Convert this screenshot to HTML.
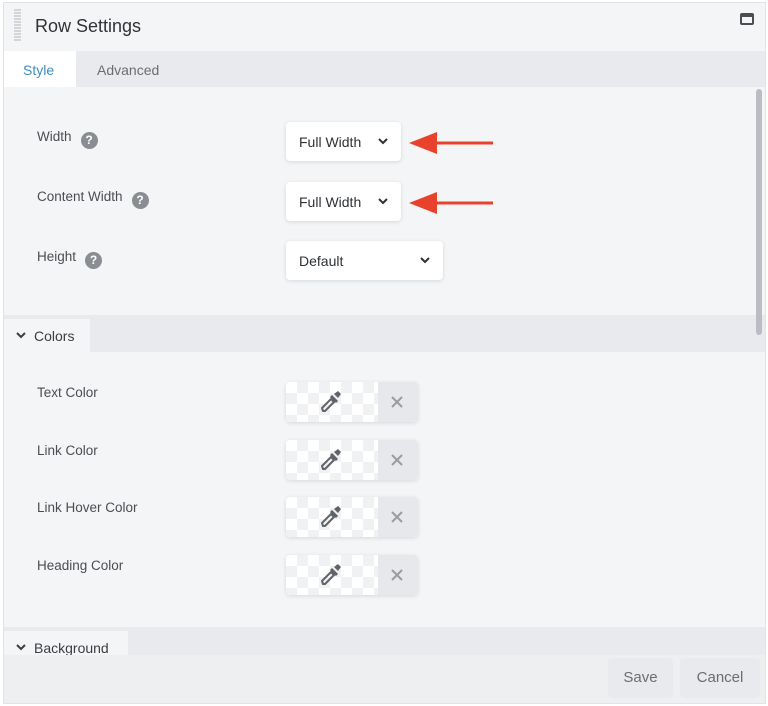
<!DOCTYPE html>
<html><head><style>
*{box-sizing:border-box;margin:0;padding:0}
body{width:768px;height:706px;background:#fff;font-family:"Liberation Sans",sans-serif;position:relative;overflow:hidden}
.panel{position:absolute;left:3px;top:2px;width:763px;height:702px;background:#f4f5f7;border:1px solid #e2e3e6}
.abs{position:absolute}
.lbl{position:absolute;left:37px;font-size:13.5px;color:#4a4d52}
.q{display:inline-block;width:17px;height:17px;border-radius:50%;background:#8a8d91;color:#fff;font-size:12px;font-weight:bold;text-align:center;line-height:17px;margin-left:9px;vertical-align:-3px}
.dd{position:absolute;left:286px;height:39px;background:#fff;border-radius:4px;box-shadow:0 1px 4px rgba(0,0,0,.12);font-size:14px;color:#2e3135;padding:12px 0 0 13px}
.dd svg{position:absolute;top:16px}
.cp{position:absolute;left:286px;width:132px;height:40px;border-radius:4px;box-shadow:0 1px 4px rgba(0,0,0,.12);overflow:hidden;background:#fff}
.chk{position:absolute;left:0;top:0;width:92px;height:40px;background-color:#fff;background-image:linear-gradient(45deg,#f0f1f3 25%,transparent 25%,transparent 75%,#f0f1f3 75%),linear-gradient(45deg,#f0f1f3 25%,transparent 25%,transparent 75%,#f0f1f3 75%);background-size:22px 22px;background-position:0 0,11px 11px}
.x{position:absolute;left:92px;top:0;width:40px;height:40px;background:#e7e8eb}
.btn{position:absolute;top:658px;height:40px;background:#e9eaed;border-radius:4px;color:#6a6d72;font-size:15px;text-align:center;line-height:40px}
</style></head><body>
<div class="panel"></div>
<div class="abs" style="left:14px;top:9px;width:7px;height:33px;background:repeating-linear-gradient(#d3d5d8 0 2px,transparent 2px 3px)"></div>
<div class="abs" style="left:35px;top:16px;font-size:18px;color:#2f3236">Row Settings</div>
<div class="abs" style="left:740px;top:13px;width:14px;height:12px;border:2px solid #4a4d52;border-top-width:4px;border-radius:2px"></div>
<div class="abs" style="left:4px;top:51px;width:761px;height:36px;background:#e9eaed"></div>
<div class="abs" style="left:4px;top:51px;width:72px;height:36px;background:#fff;color:#3f8fbf;font-size:14px;padding:11px 0 0 19px">Style</div>
<div class="abs" style="left:97px;top:62px;color:#6a6d72;font-size:14px">Advanced</div>
<div class="lbl" style="top:129px">Width<span class="q">?</span></div>
<div class="dd" style="top:122px;width:115px">Full Width<svg style="left:92px" width="10" height="7"><path d="M1 1l4 4 4-4" stroke="#2e3135" stroke-width="2" fill="none"/></svg></div>
<div class="lbl" style="top:189px">Content Width<span class="q">?</span></div>
<div class="dd" style="top:182px;width:115px">Full Width<svg style="left:92px" width="10" height="7"><path d="M1 1l4 4 4-4" stroke="#2e3135" stroke-width="2" fill="none"/></svg></div>
<div class="lbl" style="top:249px">Height<span class="q">?</span></div>
<div class="dd" style="top:241px;width:157px">Default<svg style="left:134px" width="10" height="7"><path d="M1 1l4 4 4-4" stroke="#2e3135" stroke-width="2" fill="none"/></svg></div>
<svg class="abs" style="left:405px;top:128px" width="92" height="90">
<path d="M22 15H88" stroke="#e8412c" stroke-width="3"/><path d="M4 15L32 4V26Z" fill="#e8412c"/>
<path d="M22 75H88" stroke="#e8412c" stroke-width="3"/><path d="M4 75L32 64V86Z" fill="#e8412c"/>
</svg>
<div class="abs" style="left:4px;top:315px;width:761px;height:37px;background:#e9eaed"></div>
<div class="abs" style="left:4px;top:319px;width:86px;height:33px;background:#f4f5f7;font-size:14px;color:#3a3d41;padding:9px 0 0 30px">Colors</div>
<svg class="abs" style="left:16px;top:332px" width="10" height="7"><path d="M1 1l4 4 4-4" stroke="#3a3d41" stroke-width="2" fill="none"/></svg>
<div class="abs" style="left:756px;top:89px;width:6px;height:246px;background:#babdc3;border-radius:3px"></div>
<div class="lbl" style="top:385px">Text Color</div>
<div class="lbl" style="top:443px">Link Color</div>
<div class="lbl" style="top:500px">Link Hover Color</div>
<div class="lbl" style="top:558px">Heading Color</div>
<div class="cp" style="top:382px"><div class="chk"></div><div class="x"></div></div>
<div class="cp" style="top:440px"><div class="chk"></div><div class="x"></div></div>
<div class="cp" style="top:497px"><div class="chk"></div><div class="x"></div></div>
<div class="cp" style="top:555px"><div class="chk"></div><div class="x"></div></div>
<svg class="abs" style="left:286px;top:382px" width="132" height="215">
<g id="ic"><path d="M37 29l-1-3 9-9 3 3-9 9z" stroke="#606368" stroke-width="2" fill="none" stroke-linejoin="round"/><path d="M45 14l6 6" stroke="#606368" stroke-width="3"/><path d="M48 12l4-3 3 3-3 4z" fill="#606368"/><path d="M106 15l10 10M116 15l-10 10" stroke="#999ca1" stroke-width="2"/></g>
<use href="#ic" y="58"/><use href="#ic" y="115"/><use href="#ic" y="173"/>
</svg>
<div class="abs" style="left:4px;top:627px;width:761px;height:28px;background:#e9eaed"></div>
<div class="abs" style="left:4px;top:631px;width:124px;height:24px;background:#f4f5f7;font-size:14px;color:#3a3d41;padding:9px 0 0 30px;overflow:hidden">Background</div>
<svg class="abs" style="left:16px;top:644px" width="10" height="7"><path d="M1 1l4 4 4-4" stroke="#3a3d41" stroke-width="2" fill="none"/></svg>
<div class="abs" style="left:4px;top:655px;width:761px;height:48px;background:#eeeff1"></div>
<div class="btn" style="left:608px;width:65px">Save</div>
<div class="btn" style="left:680px;width:80px">Cancel</div>
</body></html>
